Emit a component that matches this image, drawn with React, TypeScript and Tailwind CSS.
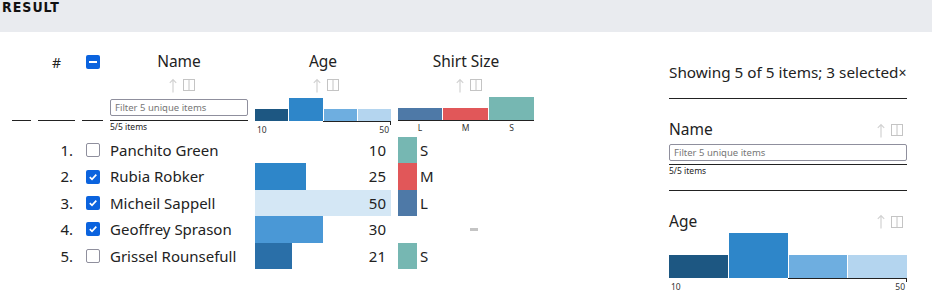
import React from 'react';

type Person = {
  name: string;
  age: number;
  size: string;
  checked: boolean;
  ageColor: string;
};

const people: Person[] = [
  { name: 'Panchito Green', age: 10, size: 'S', checked: false, ageColor: 'bg-[#1d5782]' },
  { name: 'Rubia Robker', age: 25, size: 'M', checked: true, ageColor: 'bg-[#2e86c9]' },
  { name: 'Micheil Sappell', age: 50, size: 'L', checked: true, ageColor: 'bg-[#d4e7f5]' },
  { name: 'Geoffrey Sprason', age: 30, size: '', checked: true, ageColor: 'bg-[#4a98d6]' },
  { name: 'Grissel Rounsefull', age: 21, size: 'S', checked: false, ageColor: 'bg-[#2a6fa8]' },
];

const sizeColor: Record<string, string> = {
  S: 'bg-[#76b7b2]',
  M: 'bg-[#e15759]',
  L: 'bg-[#4e79a7]',
};

const cols = 'grid grid-cols-[19px_37px_21px_138px_136px_136px] gap-x-[7px]';

const SortIcons = () => (
  <div className="flex items-center gap-[6px]">
    <svg width="8" height="15" viewBox="0 0 8 15" className="text-[#d2d2d2]">
      <path d="M4 14.5V1.5M0.8 4.8L4 1.5l3.2 3.3" stroke="currentColor" fill="none" strokeWidth="1.2" />
    </svg>
    <svg width="12" height="12" viewBox="0 0 12 12" className="text-[#c4c4c4]">
      <rect x="0.5" y="0.5" width="11" height="11" fill="none" stroke="currentColor" />
      <path d="M6 0.5v11" stroke="currentColor" />
    </svg>
  </div>
);

const Checkbox = ({ checked, mixed }: { checked?: boolean; mixed?: boolean }) => {
  if (mixed) {
    return (
      <div className="w-[14px] h-[14px] rounded-[2px] bg-[#0b63de] flex items-center justify-center">
        <div className="w-[8px] h-[2px] bg-white" />
      </div>
    );
  }
  if (checked) {
    return (
      <div className="w-[14px] h-[14px] rounded-[2px] bg-[#0b63de] flex items-center justify-center">
        <svg width="10" height="10" viewBox="0 0 10 10">
          <path d="M1.8 5.2L4 7.3 8.3 2.6" stroke="white" strokeWidth="1.7" fill="none" />
        </svg>
      </div>
    );
  }
  return <div className="w-[14px] h-[14px] rounded-[2px] border-[1.5px] border-[#8f8f9d] bg-white" />;
};

const FilterInput = () => (
  <div className="h-[17px] w-full border border-[#8f8f9d] rounded-[2px] px-[4px] flex items-center text-[9.5px] text-[#767676] leading-none">
    Filter 5 unique items
  </div>
);

export default function App() {
  return (
    <div className="w-[932px] h-[302px] bg-white text-[#222] overflow-hidden" style={{ fontFamily: '"Noto Sans", "Open Sans", sans-serif' }}>
      <div className="h-[32px] bg-[#e9ebef] px-[2px]">
        <div className="text-[14px] font-bold tracking-[1px] leading-[15px] text-[#111]" style={{ fontFamily: '"DejaVu Sans Condensed", "Noto Sans", sans-serif' }}>
          RESULT
        </div>
      </div>

      <div className="flex">
        {/* table */}
        <div className="w-[669px] pl-[12px] pt-[18px]">
          <div className={`${cols} h-[24px] items-center`}>
            <div />
            <div className="text-center text-[14px]">#</div>
            <div className="flex justify-center pl-[1px]">
              <Checkbox mixed />
            </div>
            <div className="text-center text-[15.5px]">Name</div>
            <div className="text-center text-[15.5px]">Age</div>
            <div className="text-center text-[15.5px]">Shirt Size</div>
          </div>

          <div className={`${cols} h-[22px] items-center`}>
            <div />
            <div />
            <div />
            <div className="flex justify-center pl-[6px]"><SortIcons /></div>
            <div className="flex justify-center pl-[6px]"><SortIcons /></div>
            <div className="flex justify-center pl-[6px]"><SortIcons /></div>
          </div>

          <div className={`${cols} h-[25px] items-end`}>
            <div className="border-b-[1.5px] border-[#222]" />
            <div className="border-b-[1.5px] border-[#222]" />
            <div className="border-b-[1.5px] border-[#222]" />
            <div className="flex flex-col pb-[4px] border-b-[1.5px] border-[#222]">
              <FilterInput />
            </div>
            <div className="flex items-end gap-[1px] h-[23px]">
              <div className="flex-1 h-[12px] bg-[#1d5782]" />
              <div className="flex-1 h-[23px] bg-[#2e86c9]" />
              <div className="flex-1 h-[12px] bg-[#6eaee0]" />
              <div className="flex-1 h-[12px] bg-[#b4d5ef]" />
            </div>
            <div className="flex items-end gap-[1px] h-[24.5px] border-b-[1.5px] border-[#222]">
              <div className="w-[44px] h-[12px] bg-[#4e79a7]" />
              <div className="w-[45px] h-[12px] bg-[#e15759]" />
              <div className="flex-1 h-[23px] bg-[#76b7b2]" />
            </div>
          </div>

          <div className={`${cols} h-[14px]`}>
            <div />
            <div />
            <div />
            <div className="text-[8.5px] leading-[12px]">5/5 items</div>
            <div className="relative">
              <div className="ml-[50%] h-[4px] border-t-[1.5px] border-r-[1.5px] border-[#222]" />
              <div className="flex justify-between px-[2px] text-[8.5px] leading-[9px] text-[#333]">
                <span>10</span>
                <span>50</span>
              </div>
            </div>
            <div className="flex gap-[1px] pt-[2px] text-[8.5px] leading-[10px] text-[#333]">
              <div className="w-[44px] text-center">L</div>
              <div className="w-[45px] text-center">M</div>
              <div className="flex-1 text-center">S</div>
            </div>
          </div>

          <div className="mt-[2px]">
            {people.map((p, i) => (
              <div key={p.name} className={`${cols} h-[26.4px] text-[15px]`}>
                <div />
                <div className="flex items-center justify-end pr-[2px]">{i + 1}.</div>
                <div className="flex items-center justify-center pl-[1px]">
                  <Checkbox checked={p.checked} />
                </div>
                <div className="flex items-center whitespace-nowrap">{p.name}</div>
                <div className="relative flex items-center justify-end pr-[5px]">
                  <div className={`absolute left-0 top-0 bottom-0 ${p.ageColor}`} style={{ width: `${((p.age - 10) / 40) * 100}%` }} />
                  <span className="relative">{p.age}</span>
                </div>
                <div className="flex items-stretch">
                  {p.size ? (
                    <>
                      <div className={`w-[19px] ${sizeColor[p.size]}`} />
                      <div className="ml-[3px] flex items-center">{p.size}</div>
                    </>
                  ) : (
                    <div className="ml-[72px] w-[8px] h-[3px] self-center bg-[#c4c4c4]" />
                  )}
                </div>
              </div>
            ))}
          </div>
        </div>

        {/* side panel */}
        <div className="w-[238px] pt-[28px]">
          <div className="h-[24px] text-[15.3px] whitespace-nowrap leading-[24px]">
            Showing 5 of 5 items; 3 selected<span className="text-[14px]">×</span>
          </div>
          <div className="mt-[14px] border-t-[1.5px] border-[#222]" />

          <div className="mt-[19px] h-[24px] flex items-center justify-between pr-[4px]">
            <span className="text-[15.5px]">Name</span>
            <SortIcons />
          </div>
          <div className="mt-[2px]">
            <FilterInput />
          </div>
          <div className="mt-[3px] border-t-[1.5px] border-[#222]" />
          <div className="h-[12px] text-[8.5px] leading-[12px]">5/5 items</div>
          <div className="mt-[13px] border-t-[1.5px] border-[#222]" />

          <div className="mt-[19px] h-[23px] flex items-center justify-between pr-[4px]">
            <span className="text-[15.5px]">Age</span>
            <SortIcons />
          </div>
          <div className="flex items-end gap-[1px] h-[45px]">
            <div className="flex-1 h-[23px] bg-[#1d5782]" />
            <div className="flex-1 h-[45px] bg-[#2e86c9]" />
            <div className="flex-1 h-[23px] bg-[#6eaee0]" />
            <div className="flex-1 h-[23px] bg-[#b4d5ef]" />
          </div>
          <div className="ml-[50%] h-[4px] border-t-[1.5px] border-r-[1.5px] border-[#222]" />
          <div className="flex justify-between px-[2px] text-[8.5px] leading-[9px] text-[#333]">
            <span>10</span>
            <span>50</span>
          </div>
        </div>
      </div>
    </div>
  );
}
